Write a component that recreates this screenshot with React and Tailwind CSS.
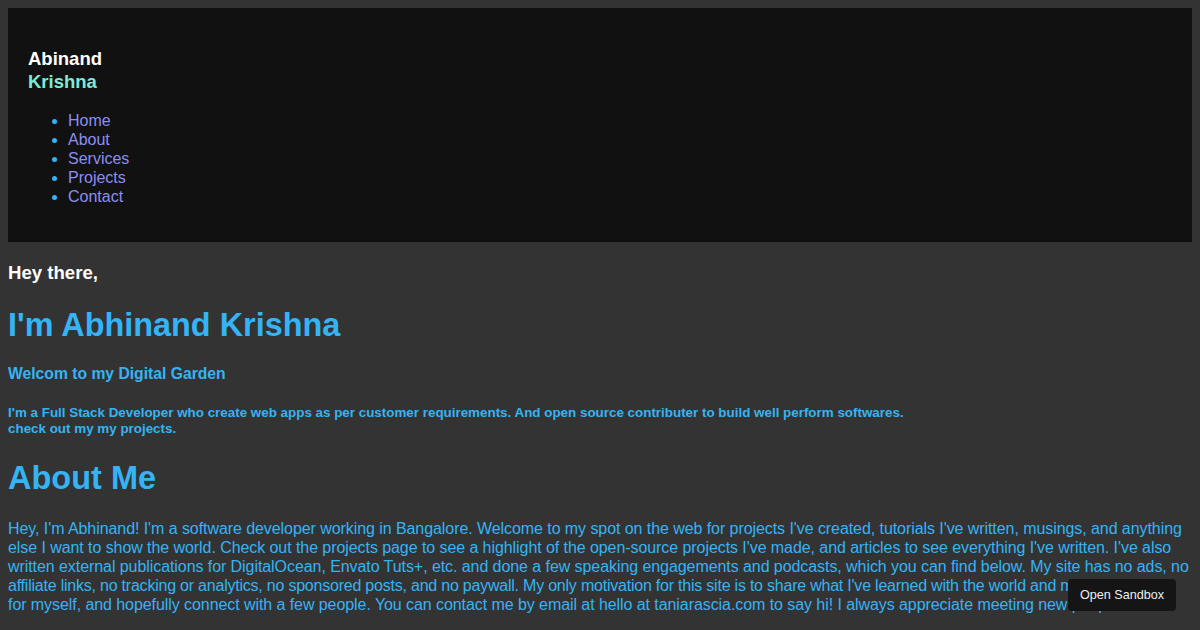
import React from "react";

const NAV_ITEMS = ["Home", "About", "Services", "Projects", "Contact"];

const ABOUT_START =
  "Hey, I'm Abhinand! I'm a software developer working in Bangalore. Welcome to my spot on the web for projects I've created, tutorials I've written, musings, and anything else I want to show the world. Check out the projects page to see a highlight of the open-source projects I've made, and articles to see everything I've written. I've also written external publications for DigitalOcean, Envato Tuts+, etc. and done a few speaking engagements and podcasts, which you can find below. My site has no ads, no ";
const ABOUT_MIDDLE =
  "affiliate links, no tracking or analytics, no sponsored posts, and no paywall. My only motivation for this site is to share what I've learned with the world and make resources";
const ABOUT_END =
  " for myself, and hopefully connect with a few people. You can contact me by email at hello at taniarascia.com to say hi! I always appreciate meeting new people.";

export default function App() {
  return (
    <div className="min-h-screen bg-[#333333] p-2 font-['Liberation_Sans',Arial,sans-serif] leading-[1.15]">
      <header className="bg-[#111111] px-5 pt-[39px] pb-[36px]">
        <div className="text-[18.5px] font-bold leading-[23px]">
          <div className="text-white">Abinand</div>
          <div className="text-[#7fe9d6]">Krishna</div>
        </div>
        <ul className="mt-[18px] list-disc pl-10 text-[16px] leading-[19px] text-[#35b4f5]">
          {NAV_ITEMS.map((item) => (
            <li key={item}>
              <a href="#" className="text-[#8c8ef2]">
                {item}
              </a>
            </li>
          ))}
        </ul>
      </header>

      <main className="text-[#35b4f5]">
        <h3 className="mt-[20px] text-[18.6px] font-bold leading-[21px] text-white">Hey there,</h3>
        <h1 className="mt-[24px] text-[32.4px] font-bold leading-[37px]">I'm Abhinand Krishna</h1>
        <h4 className="mt-[21px] text-[15.7px] font-bold leading-[18px]">Welcom to my Digital Garden</h4>
        <h5 className="mt-[22px] text-[13.4px] font-bold leading-[16px]">
          I'm a Full Stack Developer who create web apps as per customer requirements. And open source contributer to build well perform softwares.
          <br />
          check out my my projects.
        </h5>
        <h1 className="mt-[23px] text-[32.5px] font-bold leading-[37px]">About Me</h1>
        <p className="mt-[22px] text-[16px] leading-[19px] tracking-[-0.07px]">
          {ABOUT_START}
          <span className="tracking-[-0.22px]">{ABOUT_MIDDLE}</span>
          {ABOUT_END}
        </p>
      </main>

      <button className="fixed bottom-[19px] right-[24px] h-[32px] rounded-[4px] bg-[#151515] px-[12px] text-[12.6px] text-[#eeeeee]">
        Open Sandbox
      </button>
    </div>
  );
}
